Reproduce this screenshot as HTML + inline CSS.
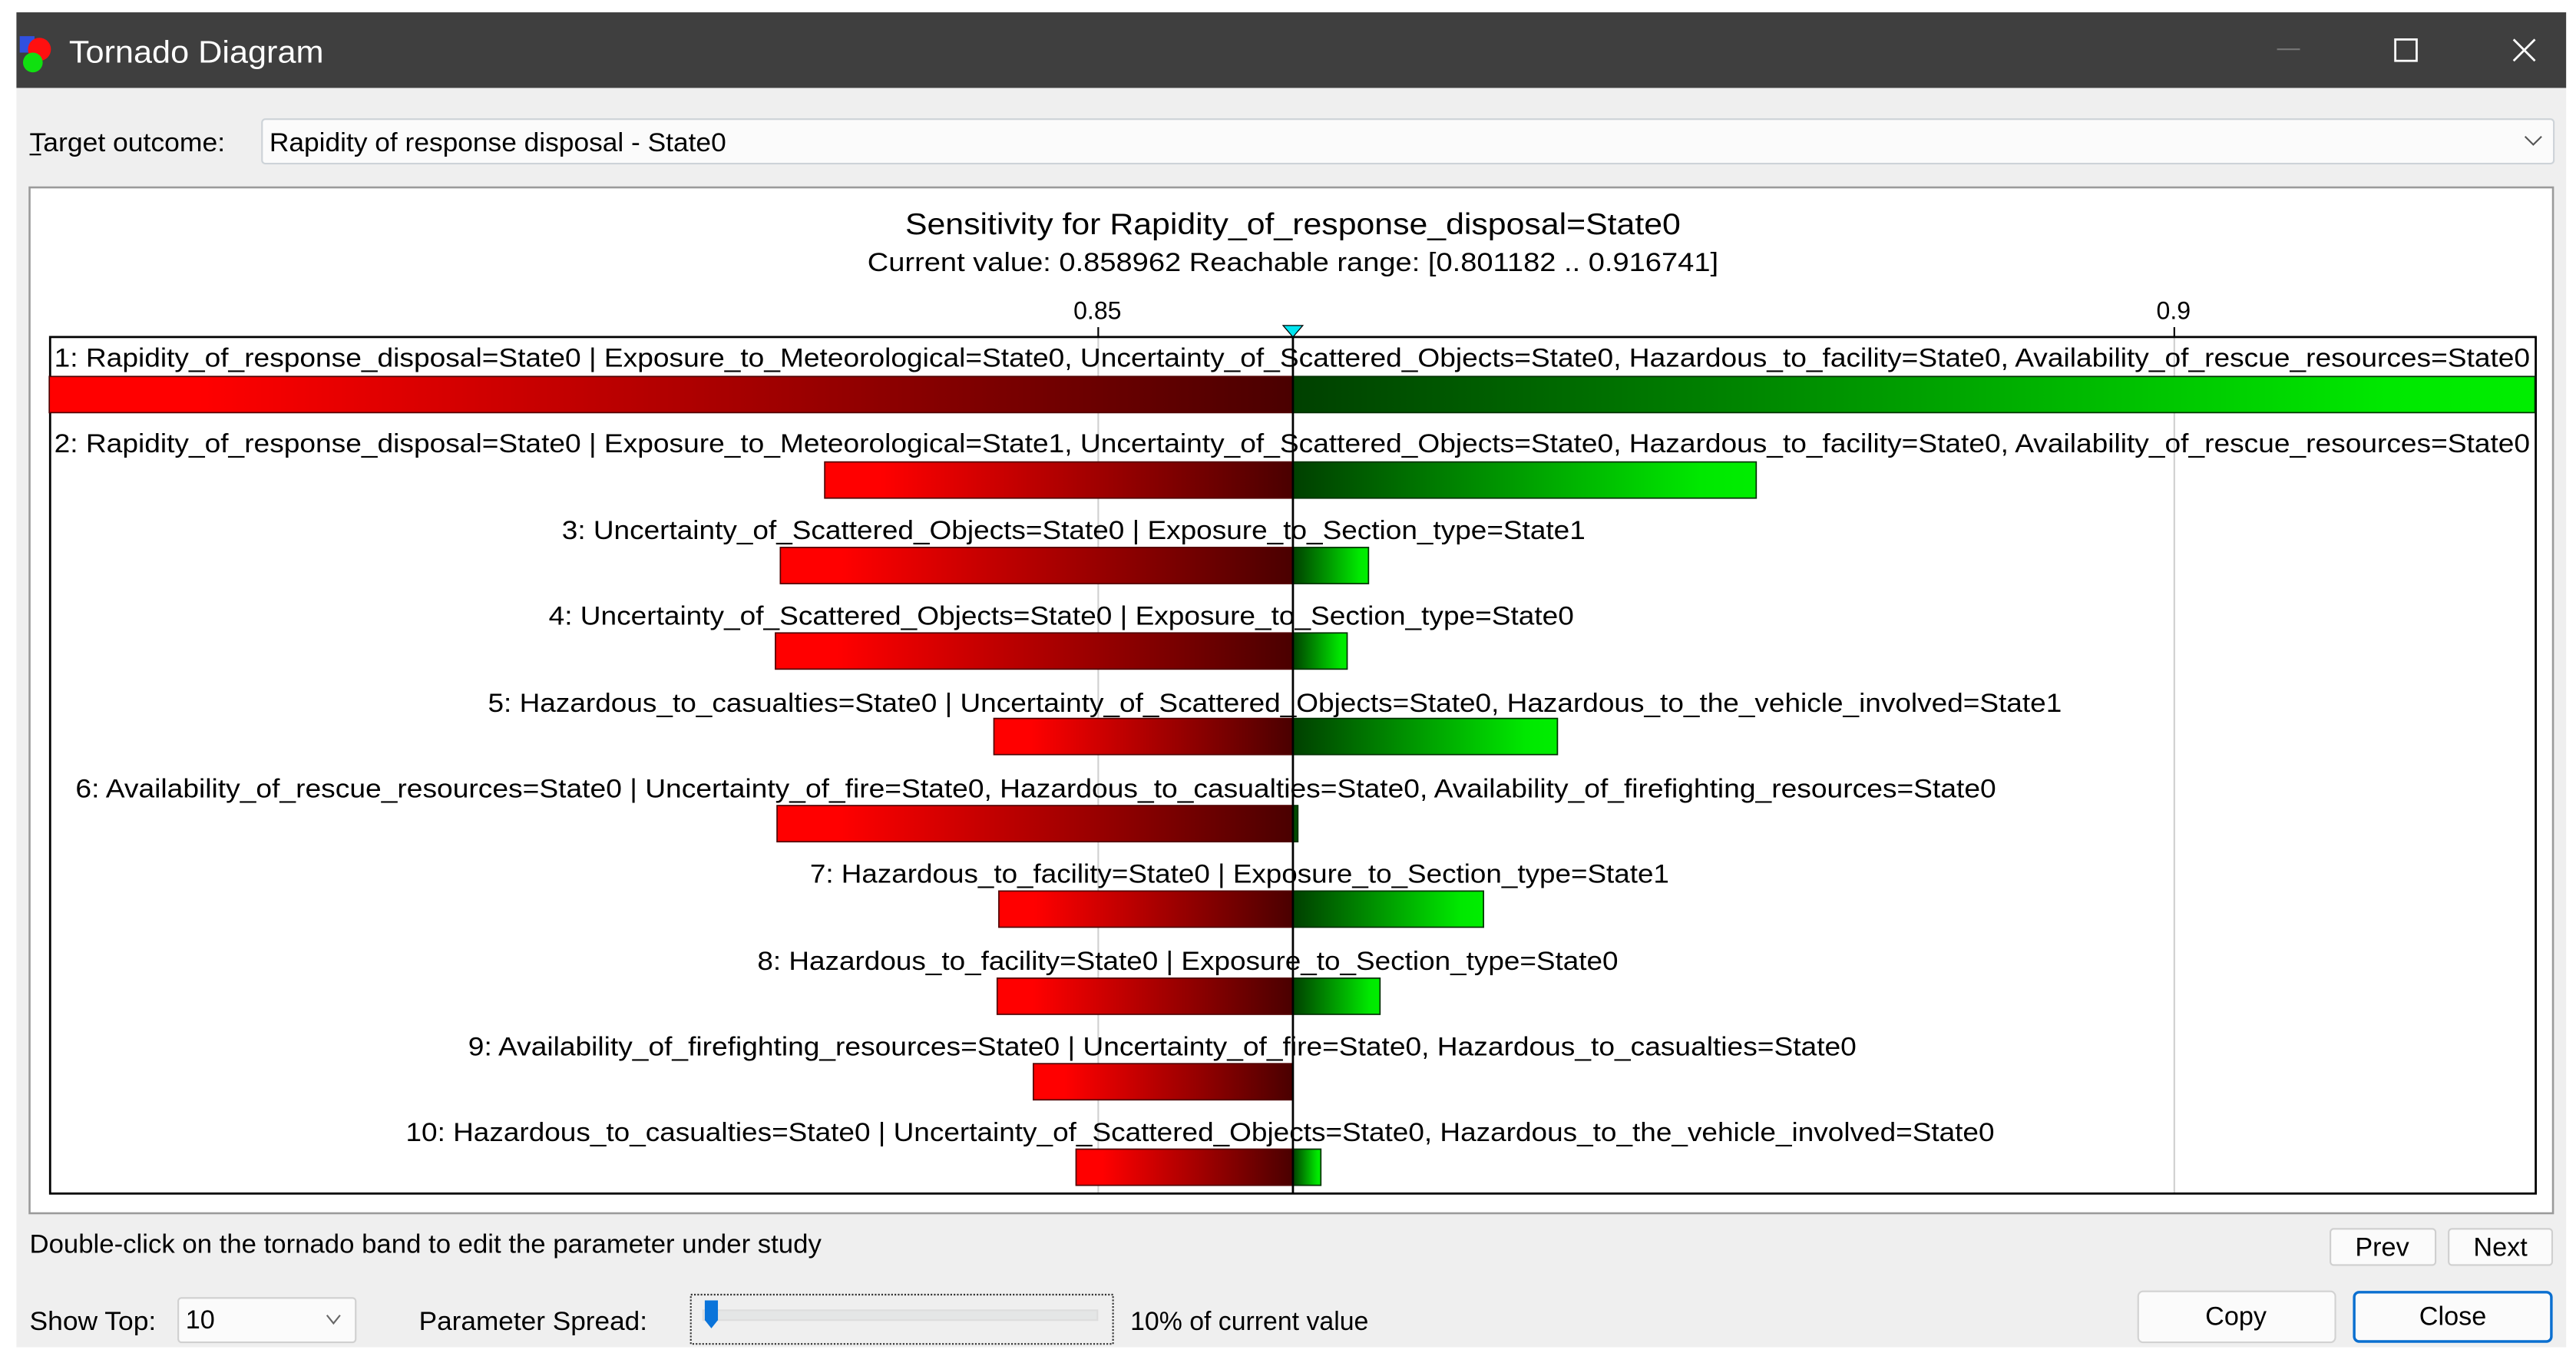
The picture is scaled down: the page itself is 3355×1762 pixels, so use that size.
<!DOCTYPE html>
<html><head><meta charset="utf-8"><style>
html,body{margin:0;padding:0;background:#fff;overflow:hidden}
svg{display:block}
text{font-family:"Liberation Sans",Arial,sans-serif}
</style></head><body>
<svg width="3355" height="1762" viewBox="0 0 1568 823" preserveAspectRatio="none" xmlns="http://www.w3.org/2000/svg">
<defs>
<linearGradient id="r" x1="0" x2="1" y1="0" y2="0"><stop offset="0" stop-color="#ff0000"/><stop offset="0.12" stop-color="#ff0000"/><stop offset="1" stop-color="#4a0000"/></linearGradient>
<linearGradient id="g" x1="0" x2="1" y1="0" y2="0"><stop offset="0" stop-color="#004000"/><stop offset="0.88" stop-color="#00e800"/><stop offset="1" stop-color="#00ee00"/></linearGradient>
</defs>
<rect x="0" y="0" width="1568" height="823" fill="#fff"/>
<rect x="10" y="7.5" width="1552" height="46" fill="#3f3f3f"/>
<rect x="12" y="22" width="9" height="10" fill="#3050e0"/>
<circle cx="24" cy="30" r="7" fill="#ff1010"/>
<circle cx="20" cy="38" r="6" fill="#10e010"/>
<text x="42" y="38" font-size="19" fill="#fff" textLength="155" lengthAdjust="spacingAndGlyphs">Tornado Diagram</text>
<line x1="1386" y1="30" x2="1400" y2="30" stroke="#777" stroke-width="1"/>
<rect x="1458" y="24" width="13" height="13" fill="none" stroke="#fff" stroke-width="1.3"/>
<path d="M1530 24 L1543 37 M1543 24 L1530 37" stroke="#fff" stroke-width="1.3"/>
<rect x="10" y="53.5" width="1552" height="766" fill="#efefef"/>
<text x="18" y="92" font-size="16" fill="#000" textLength="119" lengthAdjust="spacingAndGlyphs">Target outcome:</text>
<line x1="18" y1="94" x2="25" y2="94" stroke="#000"/>
<rect x="159.5" y="72.5" width="1395" height="27" fill="#fbfbfb" stroke="#cdd3d8" rx="2"/>
<text x="164" y="92" font-size="16" fill="#000" textLength="278" lengthAdjust="spacingAndGlyphs">Rapidity of response disposal - State0</text>
<path d="M1537 83 L1542 88 L1547 83" fill="none" stroke="#555" stroke-width="1"/>
<rect x="18" y="114" width="1536" height="624" fill="#fff" stroke="#9a9a9a" stroke-width="1.2"/>
<text x="787" y="142.5" font-size="18" text-anchor="middle" textLength="472" lengthAdjust="spacingAndGlyphs">Sensitivity for Rapidity_of_response_disposal=State0</text>
<text x="787" y="165" font-size="16" text-anchor="middle" textLength="518" lengthAdjust="spacingAndGlyphs">Current value: 0.858962  Reachable range: [0.801182 .. 0.916741]</text>
<text x="668" y="194" font-size="15" text-anchor="middle">0.85</text>
<text x="1323" y="194" font-size="15" text-anchor="middle">0.9</text>
<line x1="668.5" y1="199" x2="668.5" y2="726" stroke="#d0d0d0"/>
<line x1="1323.5" y1="199" x2="1323.5" y2="726" stroke="#d0d0d0"/>
<line x1="668.5" y1="199" x2="668.5" y2="205" stroke="#000"/>
<line x1="1323.5" y1="199" x2="1323.5" y2="205" stroke="#000"/>
<rect x="30.5" y="205" width="1513" height="521" fill="none" stroke="#000" stroke-width="1.3"/>
<g stroke="#500000" stroke-width="0.8">
<rect x="30" y="229" width="757" height="22" fill="url(#r)"/>
<rect x="502" y="281" width="285" height="22" fill="url(#r)"/>
<rect x="475" y="333" width="312" height="22" fill="url(#r)"/>
<rect x="472" y="385" width="315" height="22" fill="url(#r)"/>
<rect x="605" y="437" width="182" height="22" fill="url(#r)"/>
<rect x="473" y="490" width="314" height="22" fill="url(#r)"/>
<rect x="608" y="542" width="179" height="22" fill="url(#r)"/>
<rect x="607" y="595" width="180" height="22" fill="url(#r)"/>
<rect x="629" y="647" width="158" height="22" fill="url(#r)"/>
<rect x="655" y="699" width="132" height="22" fill="url(#r)"/>
</g>
<g stroke="#003000" stroke-width="0.8">
<rect x="787" y="229" width="756" height="22" fill="url(#g)"/>
<rect x="787" y="281" width="282" height="22" fill="url(#g)"/>
<rect x="787" y="333" width="46" height="22" fill="url(#g)"/>
<rect x="787" y="385" width="33" height="22" fill="url(#g)"/>
<rect x="787" y="437" width="161" height="22" fill="url(#g)"/>
<rect x="787" y="490" width="3" height="22" fill="#004a00"/>
<rect x="787" y="542" width="116" height="22" fill="url(#g)"/>
<rect x="787" y="595" width="53" height="22" fill="url(#g)"/>
<rect x="787" y="699" width="17" height="22" fill="url(#g)"/>
</g>
<g font-size="16" fill="#000">
<text x="33" y="223" textLength="1507" lengthAdjust="spacingAndGlyphs">1: Rapidity_of_response_disposal=State0 | Exposure_to_Meteorological=State0, Uncertainty_of_Scattered_Objects=State0, Hazardous_to_facility=State0, Availability_of_rescue_resources=State0</text>
<text x="33" y="275" textLength="1507" lengthAdjust="spacingAndGlyphs">2: Rapidity_of_response_disposal=State0 | Exposure_to_Meteorological=State1, Uncertainty_of_Scattered_Objects=State0, Hazardous_to_facility=State0, Availability_of_rescue_resources=State0</text>
<text x="342" y="328" textLength="623" lengthAdjust="spacingAndGlyphs">3: Uncertainty_of_Scattered_Objects=State0 | Exposure_to_Section_type=State1</text>
<text x="334" y="380" textLength="624" lengthAdjust="spacingAndGlyphs">4: Uncertainty_of_Scattered_Objects=State0 | Exposure_to_Section_type=State0</text>
<text x="297" y="433" textLength="958" lengthAdjust="spacingAndGlyphs">5: Hazardous_to_casualties=State0 | Uncertainty_of_Scattered_Objects=State0, Hazardous_to_the_vehicle_involved=State1</text>
<text x="46" y="485" textLength="1169" lengthAdjust="spacingAndGlyphs">6: Availability_of_rescue_resources=State0 | Uncertainty_of_fire=State0, Hazardous_to_casualties=State0, Availability_of_firefighting_resources=State0</text>
<text x="493" y="537" textLength="523" lengthAdjust="spacingAndGlyphs">7: Hazardous_to_facility=State0 | Exposure_to_Section_type=State1</text>
<text x="461" y="590" textLength="524" lengthAdjust="spacingAndGlyphs">8: Hazardous_to_facility=State0 | Exposure_to_Section_type=State0</text>
<text x="285" y="642" textLength="845" lengthAdjust="spacingAndGlyphs">9: Availability_of_firefighting_resources=State0 | Uncertainty_of_fire=State0, Hazardous_to_casualties=State0</text>
<text x="247" y="694" textLength="967" lengthAdjust="spacingAndGlyphs">10: Hazardous_to_casualties=State0 | Uncertainty_of_Scattered_Objects=State0, Hazardous_to_the_vehicle_involved=State0</text>
</g>
<line x1="787" y1="205" x2="787" y2="726" stroke="#000" stroke-width="1.3"/>
<path d="M781 198 L793 198 L787 205 Z" fill="#00e5f0" stroke="#000" stroke-width="0.6"/>
<text x="18" y="762" font-size="16" textLength="482" lengthAdjust="spacingAndGlyphs">Double-click on the tornado band to edit the parameter under study</text>
<rect x="1418.5" y="747.5" width="64" height="22" fill="#fbfbfb" stroke="#cfcfcf" rx="2"/>
<text x="1450" y="764" font-size="16" text-anchor="middle">Prev</text>
<rect x="1490.5" y="747.5" width="63" height="22" fill="#fbfbfb" stroke="#cfcfcf" rx="2"/>
<text x="1522" y="764" font-size="16" text-anchor="middle">Next</text>
<text x="18" y="809" font-size="16" textLength="77" lengthAdjust="spacingAndGlyphs">Show Top:</text>
<rect x="108.5" y="789.5" width="108" height="27" fill="#fbfbfb" stroke="#d0d0d0" rx="2"/>
<text x="113" y="808" font-size="16">10</text>
<path d="M199 800 L203 805 L207 800" fill="none" stroke="#666"/>
<text x="255" y="809" font-size="16" textLength="139" lengthAdjust="spacingAndGlyphs">Parameter Spread:</text>
<rect x="420.5" y="787.5" width="257" height="30" fill="none" stroke="#333" stroke-dasharray="1,1"/>
<rect x="428" y="797" width="240" height="6" fill="#e4e6e6" stroke="#ddd"/>
<path d="M429 791 L437 791 L437 803 L433 808 L429 803 Z" fill="#0a74da"/>
<text x="688" y="809" font-size="16" textLength="145" lengthAdjust="spacingAndGlyphs">10% of current value</text>
<rect x="1301.5" y="785.5" width="120" height="31" fill="#fbfbfb" stroke="#d2d2d2" rx="3"/>
<text x="1361" y="806" font-size="16" text-anchor="middle">Copy</text>
<rect x="1433" y="786" width="120" height="30" fill="#fbfbfb" stroke="#0a6fd0" stroke-width="1.6" rx="3"/>
<text x="1493" y="806" font-size="16" text-anchor="middle">Close</text>
</svg>
</body></html>
